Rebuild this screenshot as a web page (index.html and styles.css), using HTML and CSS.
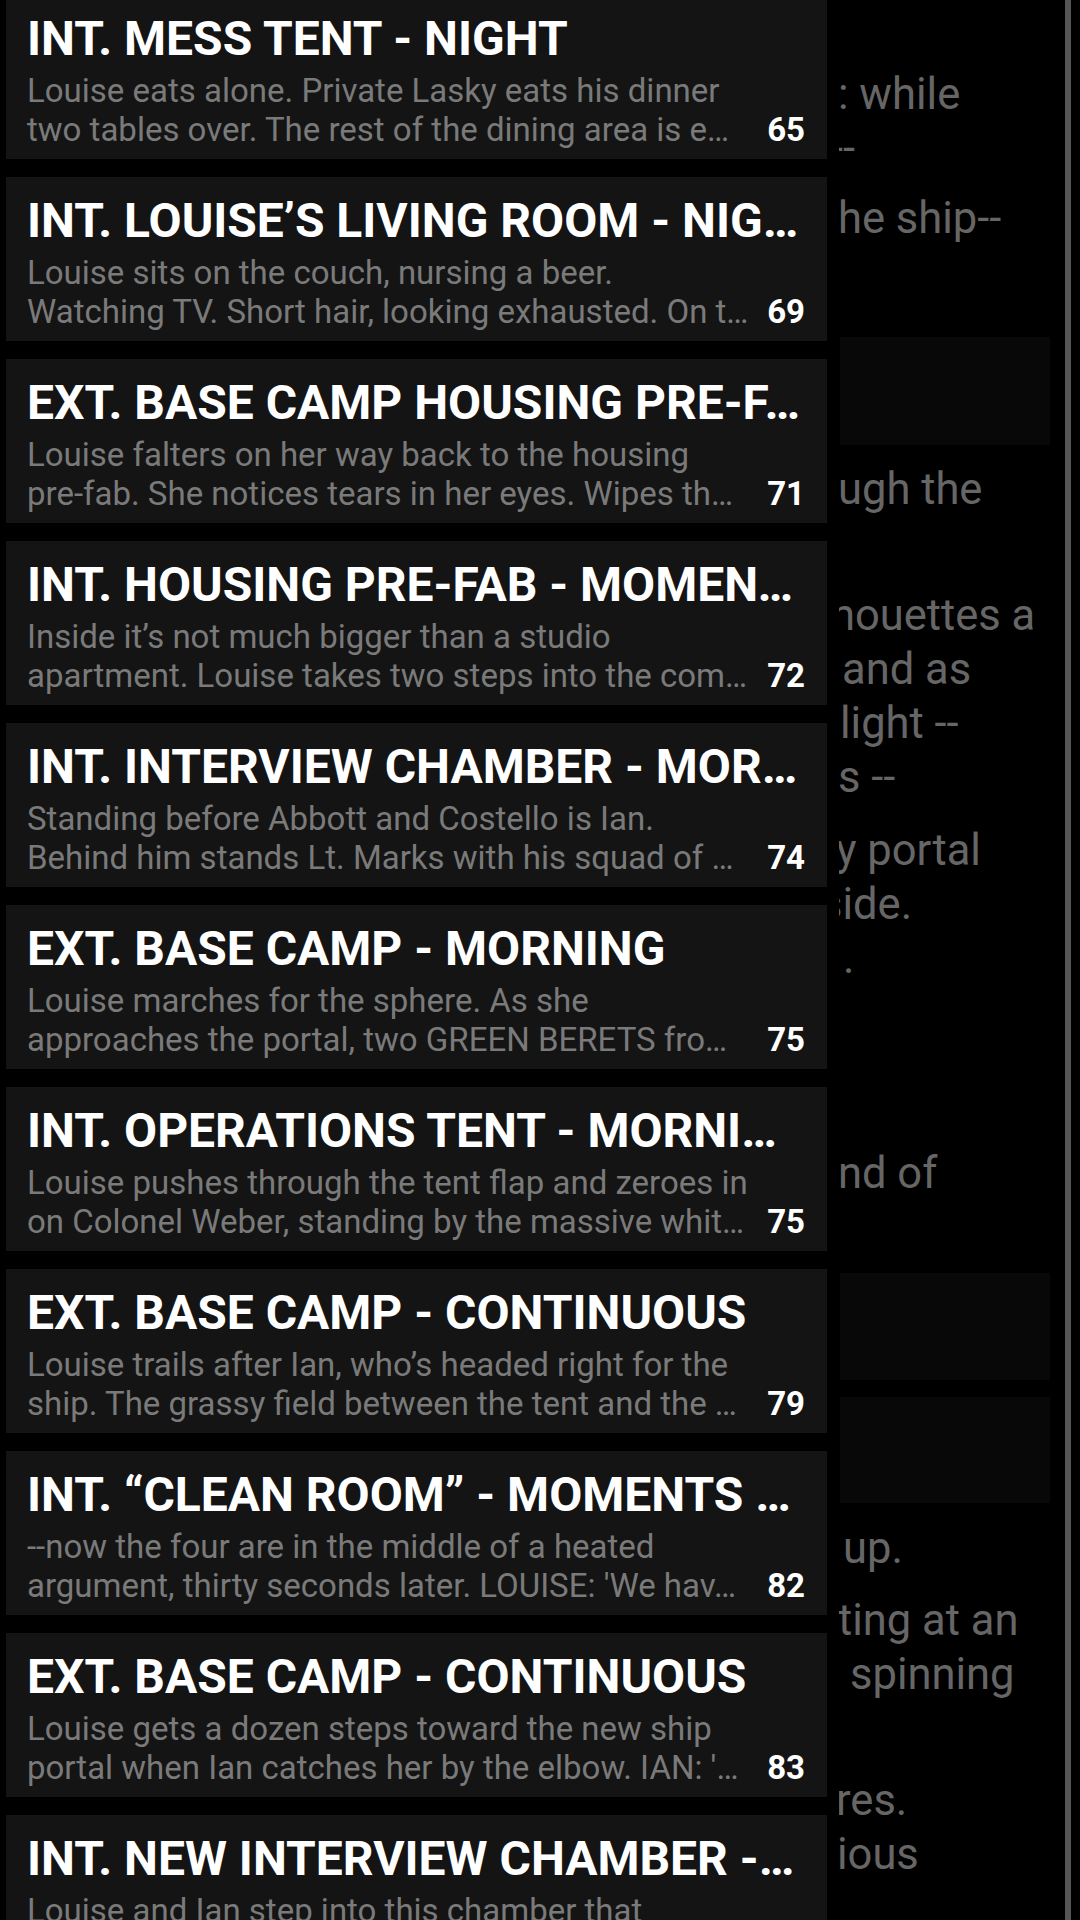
FILE: index.html
```html
<!DOCTYPE html>
<html lang="en">
<head>
<meta charset="utf-8">
<title>Scenes</title>
<link rel="stylesheet" href="styles.css">
</head>
<body>
<div class="screen">
  <main class="script">
    <div class="para p1">
      <div class="ln l-colon">: while</div>
      <div class="ln l-dash">--</div>
    </div>
    <div class="para p2"><div class="ln l-m2">he ship--</div></div>
    <div class="block b1"></div>
    <div class="para p3"><div class="ln l-m2">ugh the</div></div>
    <div class="para p4">
      <div class="ln l-hou">houettes a</div>
      <div class="ln l-p2">and as</div>
      <div class="ln">light --</div>
      <div class="ln l-m2">s --</div>
    </div>
    <div class="para p5">
      <div class="ln l-m4">y portal</div>
      <div class="ln l-side">side.</div>
      <div class="ln l-p3">.</div>
    </div>
    <div class="para p6"><div class="ln l-m2">nd of</div></div>
    <div class="block b2"></div>
    <div class="block b3"></div>
    <div class="para p7"><div class="ln l-p3">up.</div></div>
    <div class="para p8">
      <div class="ln l-m2">ting at an</div>
      <div class="ln l-p10">spinning</div>
    </div>
    <div class="para p9">
      <div class="ln l-m4">res.</div>
      <div class="ln l-m3">ious</div>
    </div>
  </main>
  <div class="track"><div class="thumb"></div></div>

  <nav class="drawer">
    <ul class="scenes">
      <li class="scene">
        <div class="title">INT. MESS TENT - NIGHT</div>
        <div class="row">
          <p class="desc"><span>Louise eats alone. Private Lasky eats his dinner</span><span>two tables over. The rest of the dining area is e…</span></p>
          <span class="page">65</span>
        </div>
      </li>
      <li class="scene">
        <div class="title">INT. LOUISE’S LIVING ROOM - NIGHT</div>
        <div class="row">
          <p class="desc"><span>Louise sits on the couch, nursing a beer.</span><span>Watching TV. Short hair, looking exhausted. On t…</span></p>
          <span class="page">69</span>
        </div>
      </li>
      <li class="scene">
        <div class="title">EXT. BASE CAMP HOUSING PRE-FAB - NIGHT</div>
        <div class="row">
          <p class="desc"><span>Louise falters on her way back to the housing</span><span>pre-fab. She notices tears in her eyes. Wipes th…</span></p>
          <span class="page">71</span>
        </div>
      </li>
      <li class="scene">
        <div class="title">INT. HOUSING PRE-FAB - MOMENTS LATER</div>
        <div class="row">
          <p class="desc"><span>Inside it’s not much bigger than a studio</span><span>apartment. Louise takes two steps into the com…</span></p>
          <span class="page">72</span>
        </div>
      </li>
      <li class="scene">
        <div class="title">INT. INTERVIEW CHAMBER - MORNING</div>
        <div class="row">
          <p class="desc"><span>Standing before Abbott and Costello is Ian.</span><span>Behind him stands Lt. Marks with his squad of …</span></p>
          <span class="page">74</span>
        </div>
      </li>
      <li class="scene">
        <div class="title">EXT. BASE CAMP - MORNING</div>
        <div class="row">
          <p class="desc"><span>Louise marches for the sphere. As she</span><span>approaches the portal, two GREEN BERETS fro…</span></p>
          <span class="page">75</span>
        </div>
      </li>
      <li class="scene">
        <div class="title">INT. OPERATIONS TENT - MORNING</div>
        <div class="row">
          <p class="desc"><span>Louise pushes through the tent flap and zeroes in</span><span>on Colonel Weber, standing by the massive whit…</span></p>
          <span class="page">75</span>
        </div>
      </li>
      <li class="scene">
        <div class="title">EXT. BASE CAMP - CONTINUOUS</div>
        <div class="row">
          <p class="desc"><span>Louise trails after Ian, who’s headed right for the</span><span>ship. The grassy field between the tent and the …</span></p>
          <span class="page">79</span>
        </div>
      </li>
      <li class="scene">
        <div class="title">INT. “CLEAN ROOM” - MOMENTS LATER</div>
        <div class="row">
          <p class="desc"><span>--now the four are in the middle of a heated</span><span>argument, thirty seconds later. LOUISE: 'We hav…</span></p>
          <span class="page">82</span>
        </div>
      </li>
      <li class="scene">
        <div class="title">EXT. BASE CAMP - CONTINUOUS</div>
        <div class="row">
          <p class="desc"><span>Louise gets a dozen steps toward the new ship</span><span>portal when Ian catches her by the elbow. IAN: '…</span></p>
          <span class="page">83</span>
        </div>
      </li>
      <li class="scene">
        <div class="title">INT. NEW INTERVIEW CHAMBER - MOMENTS LATER</div>
        <div class="row">
          <p class="desc"><span>Louise and Ian step into this chamber that</span><span>looks nothing like the last one. The walls cur…</span></p>
          <span class="page">85</span>
        </div>
      </li>
    </ul>
  </nav>
</div>
</body>
</html>
```
FILE: styles.css
```css
* { box-sizing: border-box; }

html, body {
  margin: 0;
  padding: 0;
  background: #000;
}

body {
  width: 1080px;
  height: 1920px;
  overflow: hidden;
  font-family: Roboto, "Noto Sans", "Liberation Sans", sans-serif;
}

.screen {
  position: relative;
  width: 1080px;
  height: 1920px;
  display: flex;
  flex-direction: row;
  overflow: hidden;
  background: #000;
}

/* background script view */
.script {
  flex: 1;
  display: flex;
  flex-direction: column;
  padding-left: 840px;
  color: #666;
  font-size: 43.5px;
  line-height: 54px;
  white-space: nowrap;
}

.para { display: flex; flex-direction: column; }
.ln { height: 54px; }

.p1 { margin-top: 68px; }
.p2 { margin-top: 16px; }
.b1 { margin-top: 91px; }
.p3 { margin-top: 18px; }
.p4 { margin-top: 72px; }
.p5 { margin-top: 19px; }
.p6 { margin-top: 161px; }
.b2 { margin-top: 72px; }
.b3 { margin-top: 17px; }
.p7 { margin-top: 19px; }
.p8 { margin-top: 18px; }
.p9 { margin-top: 72px; }

.block {
  width: 210px;
  height: 108px;
  background: #080808;
  flex: none;
}
.b2 { height: 107px; }
.b3 { height: 106px; }

.l-colon { margin-left: -2px; }
.l-dash { margin-left: -9px; }
.l-m2 { margin-left: -2px; }
.l-m3 { margin-left: -3px; }
.l-m4 { margin-left: -4px; }
.l-hou { margin-left: -9px; }
.l-side { margin-left: -20px; }
.l-p2 { margin-left: 2px; }
.l-p3 { margin-left: 3px; }
.l-p10 { margin-left: 10px; }

.track {
  flex: none;
  width: 6px;
  margin-right: 9px;
  display: flex;
}
.thumb {
  flex: 1;
  background: #555;
}

/* scene drawer overlay */
.drawer {
  position: absolute;
  left: 0;
  top: 0;
  width: 839px;
  height: 1920px;
  background: #000;
  overflow: hidden;
}

.scenes {
  list-style: none;
  margin: -5px 0 0 0;
  padding: 0 12px 0 6px;
  display: flex;
  flex-direction: column;
  gap: 18px;
}

.scene {
  flex: none;
  height: 164px;
  background: #141414;
  padding: 16px 22px 10px 21px;
  display: flex;
  flex-direction: column;
  gap: 4px;
}

.title {
  color: #fff;
  font-weight: 700;
  font-size: 48px;
  line-height: 56px;
  white-space: nowrap;
  overflow: hidden;
  text-overflow: ellipsis;
}

.row {
  display: flex;
  flex-direction: row;
  align-items: flex-end;
}

.desc {
  margin: 0;
  flex: 1;
  min-width: 0;
  display: flex;
  flex-direction: column;
  color: #7a7a7a;
  font-size: 33px;
  line-height: 39px;
  white-space: nowrap;
}

.page {
  flex: none;
  margin-left: 12px;
  text-align: right;
  color: #fff;
  font-weight: 700;
  font-size: 33px;
  line-height: 39px;
}
```
